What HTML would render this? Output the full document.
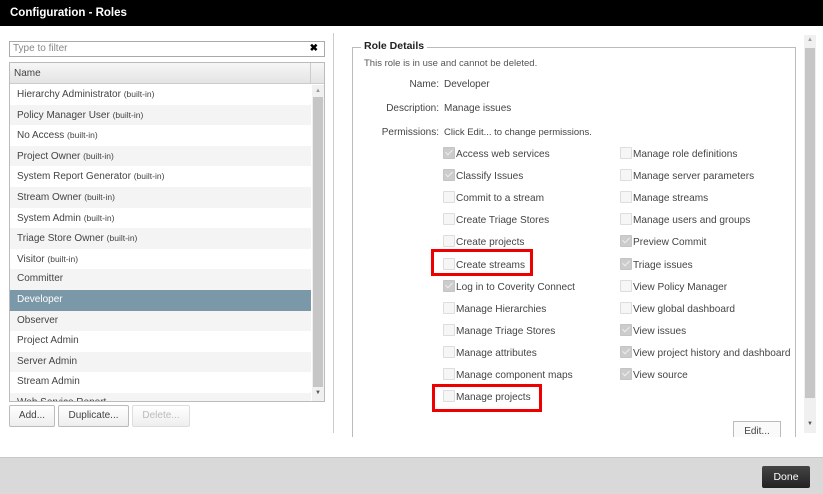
<html><head><style>
body{margin:0;width:823px;height:493px;overflow:hidden;background:#fff;font-family:"Liberation Sans",sans-serif;font-size:10px;color:#444;position:relative}
.a{position:absolute}
.title{left:0;top:0;width:823px;height:26px;background:#000;color:#fff;font-weight:bold;font-size:11.5px;line-height:26px;text-indent:10px}
.row{position:absolute;left:10px;width:301px;height:20.6px;line-height:20.6px;padding-left:7px;box-sizing:border-box}
.row small{font-size:8.5px}
.btn{position:absolute;top:405px;height:22px;border:1px solid #bbb;background:linear-gradient(#fff,#eee);box-sizing:border-box;text-align:center;line-height:20px;border-radius:2px}
.cb{position:absolute;width:10px;height:10px;border:1px solid #ddd;background:#f6f6f6;border-radius:1px}
.cb.c{background:#ccc;border-color:#c4c4c4}
.cb.c:after{content:"";position:absolute;left:3px;top:0px;width:3px;height:6px;border:solid #eee;border-width:0 1.5px 1.5px 0;transform:rotate(45deg)}
.lb{position:absolute;font-size:10.1px;color:#444}
.red{position:absolute;border:3px solid #e00;box-sizing:border-box}
</style></head><body>
<div class="a title">Configuration - Roles</div>
<div class="a" style="left:333px;top:33px;width:1px;height:400px;background:#ccc"></div>
<div class="a" style="left:9px;top:41px;width:316px;height:16px;border:1px solid #aaa;box-sizing:border-box;color:#888;line-height:14px;padding-left:3px">Type to filter<span style="position:absolute;right:6px;color:#000;font-weight:bold;font-size:10px">✖</span></div>
<div class="a" style="left:9px;top:62px;width:316px;height:340px;border:1px solid #bbb;box-sizing:border-box"></div>
<div class="a" style="left:10px;top:63px;width:314px;height:21px;background:linear-gradient(#f6f6f6,#e4e4e4);border-bottom:1px solid #ccc;line-height:21px;text-indent:4px;box-sizing:border-box">Name<div class="a" style="left:300px;top:0;width:1px;height:21px;background:#ccc"></div></div>
<div class="a" style="left:312px;top:85px;width:12px;height:316px;background:#f0f0f0"><div class="a" style="left:1px;top:12px;width:10px;height:290px;background:#c6c6c6"></div><div class="a" style="left:3px;top:3px;font-size:6px;color:#999">▲</div><div class="a" style="left:3px;top:305px;font-size:6px;color:#555">▼</div></div>
<div class="a" style="left:0;top:84px;width:311px;height:317px;overflow:hidden">
<div class="row" style="top:0">Hierarchy Administrator <small>(built-in)</small></div>
<div class="row" style="top:20.6px;background:#f4f4f4">Policy Manager User <small>(built-in)</small></div>
<div class="row" style="top:41.2px">No Access <small>(built-in)</small></div>
<div class="row" style="top:61.8px;background:#f4f4f4">Project Owner <small>(built-in)</small></div>
<div class="row" style="top:82.4px">System Report Generator <small>(built-in)</small></div>
<div class="row" style="top:103px;background:#f4f4f4">Stream Owner <small>(built-in)</small></div>
<div class="row" style="top:123.6px">System Admin <small>(built-in)</small></div>
<div class="row" style="top:144.2px;background:#f4f4f4">Triage Store Owner <small>(built-in)</small></div>
<div class="row" style="top:164.8px">Visitor <small>(built-in)</small></div>
<div class="row" style="top:185.4px;background:#f4f4f4">Committer</div>
<div class="row" style="top:206px;background:#7b98a8;color:#fff">Developer</div>
<div class="row" style="top:226.6px;background:#f4f4f4">Observer</div>
<div class="row" style="top:247.2px">Project Admin</div>
<div class="row" style="top:267.8px;background:#f4f4f4">Server Admin</div>
<div class="row" style="top:288.4px">Stream Admin</div>
<div class="row" style="top:309px;background:#f4f4f4">Web Service Report</div>
</div>
<div class="btn" style="left:9px;width:46px">Add...</div>
<div class="btn" style="left:58px;width:71px">Duplicate...</div>
<div class="btn" style="left:132px;width:58px;color:#bbb;border-color:#ddd">Delete...</div>

<div class="a" style="left:352px;top:47px;width:444px;height:390px;border:1px solid #bbb;border-bottom:none;box-sizing:border-box"></div>
<div class="a" style="left:361px;top:40px;background:#fff;padding:0 3px;font-weight:bold;color:#222;font-size:10.5px">Role Details</div>
<div class="a" style="left:364px;top:58px;font-size:9.5px;color:#555">This role is in use and cannot be deleted.</div>
<div class="a" style="left:339px;top:79px;width:100px;text-align:right">Name:</div><div class="a" style="left:444px;top:79px">Developer</div>
<div class="a" style="left:339px;top:103px;width:100px;text-align:right">Description:</div><div class="a" style="left:444px;top:103px">Manage issues</div>
<div class="a" style="left:339px;top:127px;width:100px;text-align:right">Permissions:</div><div class="a" style="left:444px;top:127px;font-size:9.5px">Click Edit... to change permissions.</div>
<div id="perm"></div>
<div class="red" style="left:431px;top:249px;width:102px;height:27px"></div>
<div class="red" style="left:432px;top:384px;width:110px;height:28px"></div>
<div class="a" style="left:733px;top:421px;width:46px;height:15px;border:1px solid #bbb;border-bottom:none;text-align:center;line-height:20px;overflow:hidden;background:#fafafa">Edit...</div>
<div class="a" style="left:804px;top:35px;width:12px;height:398px;background:#f0f0f0"><div class="a" style="left:1px;top:13px;width:10px;height:350px;background:#c6c6c6"></div><div class="a" style="left:3px;top:2px;font-size:6px;color:#999">▲</div><div class="a" style="left:3px;top:386px;font-size:6px;color:#555">▼</div></div>
<div class="a" style="left:0;top:457px;width:823px;height:36px;background:#d9d9d9;border-top:1px solid #c8c8c8"></div>
<div class="a" style="left:762px;top:466px;width:48px;height:22px;background:linear-gradient(#444,#222);border-radius:2px;color:#fff;text-align:center;line-height:22px;font-size:10.5px">Done</div>
<script>
var L=[["Access web services",1],["Classify Issues",1],["Commit to a stream",0],["Create Triage Stores",0],["Create projects",0],["Create streams",0],["Log in to Coverity Connect",1],["Manage Hierarchies",0],["Manage Triage Stores",0],["Manage attributes",0],["Manage component maps",0],["Manage projects",0]];
var R=[["Manage role definitions",0],["Manage server parameters",0],["Manage streams",0],["Manage users and groups",0],["Preview Commit",1],["Triage issues",1],["View Policy Manager",0],["View global dashboard",0],["View issues",1],["View project history and dashboard",1],["View source",1]];
var h="";function f(a,x){a.forEach(function(e,i){var y=154+i*22.1;h+='<div class="cb'+(e[1]?' c':'')+'" style="left:'+x+'px;top:'+(y-7)+'px"></div><div class="lb" style="left:'+(x+13)+'px;top:'+(y-5)+'px">'+e[0]+'</div>';});}
f(L,443);f(R,620);document.getElementById("perm").innerHTML=h;
</script>
</body></html>
